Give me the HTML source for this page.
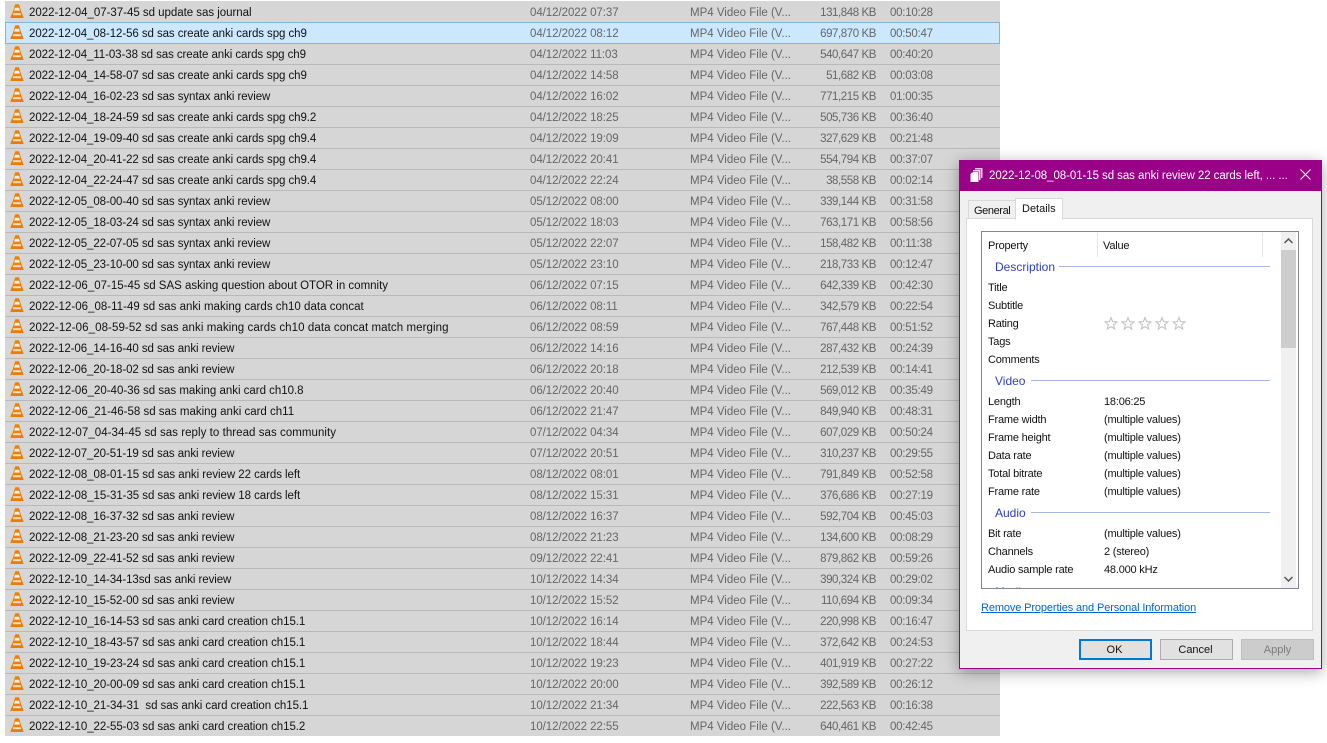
<!DOCTYPE html>
<html><head><meta charset="utf-8"><style>
html,body{margin:0;padding:0;background:#fff;width:1327px;height:743px;overflow:hidden;font:12px "Liberation Sans",sans-serif;color:#111}
#list{position:absolute;left:5px;top:1px;width:995px;height:735px;padding-top:1px;box-sizing:border-box;overflow:hidden;background:#d6d6d6;font-size:11.5px}
.r{position:relative;height:20px;border-bottom:1px solid #b9b9b9;white-space:nowrap;line-height:21px}
.r.s{background:#cce8ff;box-shadow:inset 0 0 0 1px #7fb5e0;height:22px;margin-top:-1px;border-bottom:0;line-height:21px}
.r span{position:absolute;top:1px;color:#666}
.r.s span{top:2px}
.r svg{position:absolute;left:5px;top:1px}
.r.s svg{top:2px}
.r .n{left:24px;color:#111;letter-spacing:-.08px}
.r .d{left:525px;letter-spacing:-.06px}.r .t{left:685px}.r .z{left:785px;width:86px;text-align:right;letter-spacing:-.42px}.r .l{left:885px;letter-spacing:-.25px}
#dlg{position:absolute;left:959px;top:160px;width:361px;height:507px;background:#f0f0f0;border:1px solid #9a0088;box-shadow:0 3px 14px rgba(0,0,0,.35)}
#tb{position:absolute;left:-1px;top:-1px;width:363px;height:31px;background:#9a0088;color:#fff;line-height:31px}
#tb b{position:absolute;left:30px;top:1px;font-weight:400;font-size:11.5px;white-space:nowrap;letter-spacing:-.07px}
.a{position:absolute;white-space:nowrap;line-height:16px;font-size:11px;letter-spacing:-.2px;margin-top:1px}
.h{color:#3040b8;font-size:12px;letter-spacing:0;margin-top:0}
.ln{position:absolute;height:1px;background:#a4b8e2}
.b{position:absolute;top:478px;width:71px;height:19px;border:1px solid #adadad;background:#e1e1e1;text-align:center;line-height:21px;font-size:11px}
</style></head><body>
<svg width="0" height="0" style="position:absolute"><defs><g id="v"><path d="M5.600 1.200h2.800c.5 0 .7.3.8.7l3 9.600H2l3-9.600c.1-.4.3-.7.8-.7z" fill="#f08000"/><path d="M4.900 4.800h4.200l.8 2.800H4.100z" fill="#f4f0ea"/><path d="M1.800 11h1.500l-.3 1.200h8l-.3-1.200h1.500l1.300 3.200c.1.500-.1.800-.6.800H1.100c-.5 0-.7-.3-.6-.8z" fill="#ee7a00"/><path d="M3.400 10.200h7.200l.5 1.800H2.900z" fill="#f6e2c8"/></g></defs></svg>
<div id="list">
<div class="r"><svg width="14" height="16"><use href="#v"/></svg><span class="n" style="letter-spacing:-.03px">2022-12-04_07-37-45 sd update sas journal</span><span class="d">04/12/2022 07:37</span><span class="t">MP4 Video File (V...</span><span class="z">131,848 KB</span><span class="l">00:10:28</span></div>
<div class="r s"><svg width="14" height="16"><use href="#v"/></svg><span class="n">2022-12-04_08-12-56 sd sas create anki cards spg ch9</span><span class="d">04/12/2022 08:12</span><span class="t">MP4 Video File (V...</span><span class="z">697,870 KB</span><span class="l">00:50:47</span></div>
<div class="r"><svg width="14" height="16"><use href="#v"/></svg><span class="n">2022-12-04_11-03-38 sd sas create anki cards spg ch9</span><span class="d">04/12/2022 11:03</span><span class="t">MP4 Video File (V...</span><span class="z">540,647 KB</span><span class="l">00:40:20</span></div>
<div class="r"><svg width="14" height="16"><use href="#v"/></svg><span class="n">2022-12-04_14-58-07 sd sas create anki cards spg ch9</span><span class="d">04/12/2022 14:58</span><span class="t">MP4 Video File (V...</span><span class="z">51,682 KB</span><span class="l">00:03:08</span></div>
<div class="r"><svg width="14" height="16"><use href="#v"/></svg><span class="n">2022-12-04_16-02-23 sd sas syntax anki review</span><span class="d">04/12/2022 16:02</span><span class="t">MP4 Video File (V...</span><span class="z">771,215 KB</span><span class="l">01:00:35</span></div>
<div class="r"><svg width="14" height="16"><use href="#v"/></svg><span class="n">2022-12-04_18-24-59 sd sas create anki cards spg ch9.2</span><span class="d">04/12/2022 18:25</span><span class="t">MP4 Video File (V...</span><span class="z">505,736 KB</span><span class="l">00:36:40</span></div>
<div class="r"><svg width="14" height="16"><use href="#v"/></svg><span class="n">2022-12-04_19-09-40 sd sas create anki cards spg ch9.4</span><span class="d">04/12/2022 19:09</span><span class="t">MP4 Video File (V...</span><span class="z">327,629 KB</span><span class="l">00:21:48</span></div>
<div class="r"><svg width="14" height="16"><use href="#v"/></svg><span class="n">2022-12-04_20-41-22 sd sas create anki cards spg ch9.4</span><span class="d">04/12/2022 20:41</span><span class="t">MP4 Video File (V...</span><span class="z">554,794 KB</span><span class="l">00:37:07</span></div>
<div class="r"><svg width="14" height="16"><use href="#v"/></svg><span class="n">2022-12-04_22-24-47 sd sas create anki cards spg ch9.4</span><span class="d">04/12/2022 22:24</span><span class="t">MP4 Video File (V...</span><span class="z">38,558 KB</span><span class="l">00:02:14</span></div>
<div class="r"><svg width="14" height="16"><use href="#v"/></svg><span class="n">2022-12-05_08-00-40 sd sas syntax anki review</span><span class="d">05/12/2022 08:00</span><span class="t">MP4 Video File (V...</span><span class="z">339,144 KB</span><span class="l">00:31:58</span></div>
<div class="r"><svg width="14" height="16"><use href="#v"/></svg><span class="n">2022-12-05_18-03-24 sd sas syntax anki review</span><span class="d">05/12/2022 18:03</span><span class="t">MP4 Video File (V...</span><span class="z">763,171 KB</span><span class="l">00:58:56</span></div>
<div class="r"><svg width="14" height="16"><use href="#v"/></svg><span class="n">2022-12-05_22-07-05 sd sas syntax anki review</span><span class="d">05/12/2022 22:07</span><span class="t">MP4 Video File (V...</span><span class="z">158,482 KB</span><span class="l">00:11:38</span></div>
<div class="r"><svg width="14" height="16"><use href="#v"/></svg><span class="n">2022-12-05_23-10-00 sd sas syntax anki review</span><span class="d">05/12/2022 23:10</span><span class="t">MP4 Video File (V...</span><span class="z">218,733 KB</span><span class="l">00:12:47</span></div>
<div class="r"><svg width="14" height="16"><use href="#v"/></svg><span class="n" style="letter-spacing:0">2022-12-06_07-15-45 sd SAS asking question about OTOR in comnity</span><span class="d">06/12/2022 07:15</span><span class="t">MP4 Video File (V...</span><span class="z">642,339 KB</span><span class="l">00:42:30</span></div>
<div class="r"><svg width="14" height="16"><use href="#v"/></svg><span class="n" style="letter-spacing:.02px">2022-12-06_08-11-49 sd sas anki making cards ch10 data concat</span><span class="d">06/12/2022 08:11</span><span class="t">MP4 Video File (V...</span><span class="z">342,579 KB</span><span class="l">00:22:54</span></div>
<div class="r"><svg width="14" height="16"><use href="#v"/></svg><span class="n" style="letter-spacing:.08px">2022-12-06_08-59-52 sd sas anki making cards ch10 data concat match merging</span><span class="d">06/12/2022 08:59</span><span class="t">MP4 Video File (V...</span><span class="z">767,448 KB</span><span class="l">00:51:52</span></div>
<div class="r"><svg width="14" height="16"><use href="#v"/></svg><span class="n">2022-12-06_14-16-40 sd sas anki review</span><span class="d">06/12/2022 14:16</span><span class="t">MP4 Video File (V...</span><span class="z">287,432 KB</span><span class="l">00:24:39</span></div>
<div class="r"><svg width="14" height="16"><use href="#v"/></svg><span class="n">2022-12-06_20-18-02 sd sas anki review</span><span class="d">06/12/2022 20:18</span><span class="t">MP4 Video File (V...</span><span class="z">212,539 KB</span><span class="l">00:14:41</span></div>
<div class="r"><svg width="14" height="16"><use href="#v"/></svg><span class="n" style="letter-spacing:-.02px">2022-12-06_20-40-36 sd sas making anki card ch10.8</span><span class="d">06/12/2022 20:40</span><span class="t">MP4 Video File (V...</span><span class="z">569,012 KB</span><span class="l">00:35:49</span></div>
<div class="r"><svg width="14" height="16"><use href="#v"/></svg><span class="n" style="letter-spacing:0">2022-12-06_21-46-58 sd sas making anki card ch11</span><span class="d">06/12/2022 21:47</span><span class="t">MP4 Video File (V...</span><span class="z">849,940 KB</span><span class="l">00:48:31</span></div>
<div class="r"><svg width="14" height="16"><use href="#v"/></svg><span class="n" style="letter-spacing:.05px">2022-12-07_04-34-45 sd sas reply to thread sas community</span><span class="d">07/12/2022 04:34</span><span class="t">MP4 Video File (V...</span><span class="z">607,029 KB</span><span class="l">00:50:24</span></div>
<div class="r"><svg width="14" height="16"><use href="#v"/></svg><span class="n">2022-12-07_20-51-19 sd sas anki review</span><span class="d">07/12/2022 20:51</span><span class="t">MP4 Video File (V...</span><span class="z">310,237 KB</span><span class="l">00:29:55</span></div>
<div class="r"><svg width="14" height="16"><use href="#v"/></svg><span class="n" style="letter-spacing:-.06px">2022-12-08_08-01-15 sd sas anki review 22 cards left</span><span class="d">08/12/2022 08:01</span><span class="t">MP4 Video File (V...</span><span class="z">791,849 KB</span><span class="l">00:52:58</span></div>
<div class="r"><svg width="14" height="16"><use href="#v"/></svg><span class="n" style="letter-spacing:-.06px">2022-12-08_15-31-35 sd sas anki review 18 cards left</span><span class="d">08/12/2022 15:31</span><span class="t">MP4 Video File (V...</span><span class="z">376,686 KB</span><span class="l">00:27:19</span></div>
<div class="r"><svg width="14" height="16"><use href="#v"/></svg><span class="n">2022-12-08_16-37-32 sd sas anki review</span><span class="d">08/12/2022 16:37</span><span class="t">MP4 Video File (V...</span><span class="z">592,704 KB</span><span class="l">00:45:03</span></div>
<div class="r"><svg width="14" height="16"><use href="#v"/></svg><span class="n">2022-12-08_21-23-20 sd sas anki review</span><span class="d">08/12/2022 21:23</span><span class="t">MP4 Video File (V...</span><span class="z">134,600 KB</span><span class="l">00:08:29</span></div>
<div class="r"><svg width="14" height="16"><use href="#v"/></svg><span class="n">2022-12-09_22-41-52 sd sas anki review</span><span class="d">09/12/2022 22:41</span><span class="t">MP4 Video File (V...</span><span class="z">879,862 KB</span><span class="l">00:59:26</span></div>
<div class="r"><svg width="14" height="16"><use href="#v"/></svg><span class="n">2022-12-10_14-34-13sd sas anki review</span><span class="d">10/12/2022 14:34</span><span class="t">MP4 Video File (V...</span><span class="z">390,324 KB</span><span class="l">00:29:02</span></div>
<div class="r"><svg width="14" height="16"><use href="#v"/></svg><span class="n">2022-12-10_15-52-00 sd sas anki review</span><span class="d">10/12/2022 15:52</span><span class="t">MP4 Video File (V...</span><span class="z">110,694 KB</span><span class="l">00:09:34</span></div>
<div class="r"><svg width="14" height="16"><use href="#v"/></svg><span class="n" style="letter-spacing:-.06px">2022-12-10_16-14-53 sd sas anki card creation ch15.1</span><span class="d">10/12/2022 16:14</span><span class="t">MP4 Video File (V...</span><span class="z">220,998 KB</span><span class="l">00:16:47</span></div>
<div class="r"><svg width="14" height="16"><use href="#v"/></svg><span class="n" style="letter-spacing:-.06px">2022-12-10_18-43-57 sd sas anki card creation ch15.1</span><span class="d">10/12/2022 18:44</span><span class="t">MP4 Video File (V...</span><span class="z">372,642 KB</span><span class="l">00:24:53</span></div>
<div class="r"><svg width="14" height="16"><use href="#v"/></svg><span class="n" style="letter-spacing:-.06px">2022-12-10_19-23-24 sd sas anki card creation ch15.1</span><span class="d">10/12/2022 19:23</span><span class="t">MP4 Video File (V...</span><span class="z">401,919 KB</span><span class="l">00:27:22</span></div>
<div class="r"><svg width="14" height="16"><use href="#v"/></svg><span class="n" style="letter-spacing:-.06px">2022-12-10_20-00-09 sd sas anki card creation ch15.1</span><span class="d">10/12/2022 20:00</span><span class="t">MP4 Video File (V...</span><span class="z">392,589 KB</span><span class="l">00:26:12</span></div>
<div class="r"><svg width="14" height="16"><use href="#v"/></svg><span class="n" style="letter-spacing:-.06px">2022-12-10_21-34-31&nbsp; sd sas anki card creation ch15.1</span><span class="d">10/12/2022 21:34</span><span class="t">MP4 Video File (V...</span><span class="z">222,563 KB</span><span class="l">00:16:38</span></div>
<div class="r" style="border-bottom:0"><svg width="14" height="16"><use href="#v"/></svg><span class="n" style="letter-spacing:-.06px">2022-12-10_22-55-03 sd sas anki card creation ch15.2</span><span class="d">10/12/2022 22:55</span><span class="t">MP4 Video File (V...</span><span class="z">640,461 KB</span><span class="l">00:42:45</span></div>
</div>
<div id="dlg">
<div id="tb"><svg style="position:absolute;left:10px;top:7px" width="15" height="16" viewBox="0 0 15 16"><path d="M6 1h7.500v10H12V2.500H6z" fill="#e8d0e4"/><path d="M4 3h7.500v10H10V4.500H4z" fill="#f0e0ee"/><path d="M3 5.500 5 5h4.500v10H1.500V7z" fill="#fff"/></svg><b>2022-12-08_08-01-15 sd sas anki review 22 cards left, ... ...</b><svg style="position:absolute;left:341px;top:9px" width="11" height="11" viewBox="0 0 11 11"><path d="M.5.500l10 10M10.500.500l-10 10" stroke="#fff" stroke-width="1.100"/></svg></div>
<div style="position:absolute;left:8px;top:39px;width:47px;height:18px;background:#f0f0f0;border:1px solid #d9d9d9;border-bottom:0"></div>
<div class="a" style="left:14px;top:41px;letter-spacing:-.4px">General</div>
<div style="position:absolute;left:6px;top:57px;width:345px;height:411px;background:#fff;border:1px solid #d9d9d9"></div>
<div style="position:absolute;left:55px;top:37px;width:46px;height:21px;background:#fff;border:1px solid #d9d9d9;border-bottom:0"></div>
<div class="a" style="left:62px;top:39px;letter-spacing:0">Details</div>
<div style="position:absolute;left:21px;top:70px;width:316px;height:356px;background:#fff;border:1px solid #82878f;overflow:hidden">
<div style="position:absolute;left:299px;top:0;width:15px;height:356px;background:#f0f0f0"></div>
<div style="position:absolute;left:299px;top:18px;width:15px;height:98px;background:#cdcdcd"></div>
<svg style="position:absolute;left:302px;top:6px" width="9" height="6"><path d="M.5 5 4.500 1l4 4" fill="none" stroke="#555" stroke-width="1.500"/></svg>
<svg style="position:absolute;left:302px;top:344px" width="9" height="6"><path d="M.5 1l4 4 4-4" fill="none" stroke="#555" stroke-width="1.500"/></svg>
<div style="position:absolute;left:115px;top:1px;width:1px;height:24px;background:#e5e5e5"></div>
<div style="position:absolute;left:280px;top:1px;width:1px;height:24px;background:#e5e5e5"></div>
<div class="ln" style="left:77px;top:34px;width:211px"></div>
<div class="ln" style="left:49px;top:148px;width:239px"></div>
<div class="ln" style="left:49px;top:280px;width:239px"></div>
</div>
<div class="a" style="left:28px;top:76px">Property</div><div class="a" style="left:143px;top:76px">Value</div>
<div class="a h" style="left:35px;top:98px">Description</div>
<div class="a" style="left:28px;top:118px">Title</div>
<div class="a" style="left:28px;top:136px">Subtitle</div>
<div class="a" style="left:28px;top:154px">Rating</div>
<svg style="position:absolute;left:144px;top:155px" width="84" height="15" viewBox="0 0 84 15" fill="none" stroke="#bdbdbd"><path d="M7 1.500 8.600 5.600 13 5.900 9.600 8.700 10.700 13 7 10.600 3.300 13 4.400 8.700 1 5.900 5.400 5.600z"/><path transform="translate(17 0)" d="M7 1.500 8.600 5.600 13 5.900 9.600 8.700 10.700 13 7 10.600 3.300 13 4.400 8.700 1 5.900 5.400 5.600z"/><path transform="translate(34 0)" d="M7 1.500 8.600 5.600 13 5.900 9.600 8.700 10.700 13 7 10.600 3.300 13 4.400 8.700 1 5.900 5.400 5.600z"/><path transform="translate(51 0)" d="M7 1.500 8.600 5.600 13 5.900 9.600 8.700 10.700 13 7 10.600 3.300 13 4.400 8.700 1 5.900 5.400 5.600z"/><path transform="translate(68 0)" d="M7 1.500 8.600 5.600 13 5.900 9.600 8.700 10.700 13 7 10.600 3.300 13 4.400 8.700 1 5.900 5.400 5.600z"/></svg>
<div class="a" style="left:28px;top:172px">Tags</div>
<div class="a" style="left:28px;top:190px">Comments</div>
<div class="a h" style="left:35px;top:212px">Video</div>
<div class="a" style="left:28px;top:232px">Length</div><div class="a" style="left:144px;top:232px">18:06:25</div>
<div class="a" style="left:28px;top:250px">Frame width</div><div class="a" style="left:144px;top:250px">(multiple values)</div>
<div class="a" style="left:28px;top:268px">Frame height</div><div class="a" style="left:144px;top:268px">(multiple values)</div>
<div class="a" style="left:28px;top:286px">Data rate</div><div class="a" style="left:144px;top:286px">(multiple values)</div>
<div class="a" style="left:28px;top:304px">Total bitrate</div><div class="a" style="left:144px;top:304px">(multiple values)</div>
<div class="a" style="left:28px;top:322px">Frame rate</div><div class="a" style="left:144px;top:322px">(multiple values)</div>
<div class="a h" style="left:35px;top:344px">Audio</div>
<div class="a" style="left:28px;top:364px">Bit rate</div><div class="a" style="left:144px;top:364px">(multiple values)</div>
<div class="a" style="left:28px;top:382px">Channels</div><div class="a" style="left:144px;top:382px">2 (stereo)</div>
<div class="a" style="left:28px;top:400px">Audio sample rate</div><div class="a" style="left:144px;top:400px">48.000 kHz</div>
<div class="a h" style="left:35px;top:424px;height:3px;overflow:hidden;line-height:14px">Media</div>
<div class="a" style="left:21px;top:438px;color:#0066cc;text-decoration:underline;letter-spacing:-.12px">Remove Properties and Personal Information</div>
<div class="b" style="left:119px;top:478px;width:69px;height:17px;border:2px solid #0078d7;line-height:19px;text-indent:-2px">OK</div>
<div class="b" style="left:200px;text-indent:-2px">Cancel</div>
<div class="b" style="left:281px;background:#ccc;border-color:#bfbfbf;color:#7c7c7c">Apply</div>
</div>
</body></html>
